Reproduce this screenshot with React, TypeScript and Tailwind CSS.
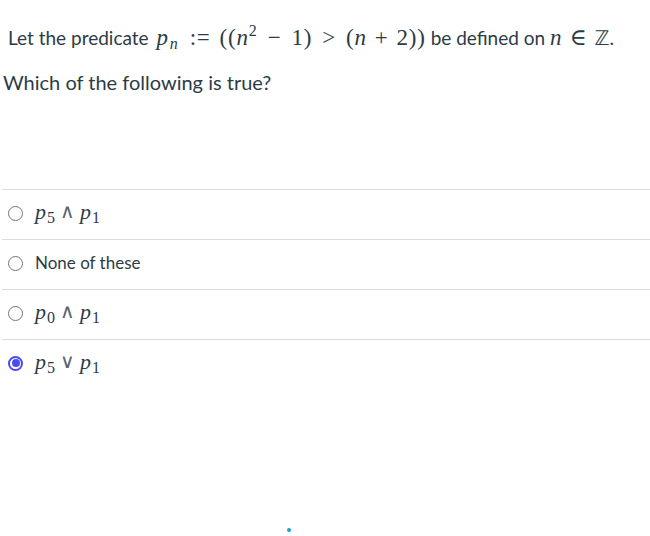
import React from "react";

function V({ children }: { children: React.ReactNode }) {
  return <span className="italic">{children}</span>;
}

function Math({ children, size = "text-[23px]", cls = "" }: { children: React.ReactNode; size?: string; cls?: string }) {
  return (
    <span
      className={`${size} ${cls} leading-none whitespace-nowrap`}
      style={{ fontFamily: '"Liberation Serif", "DejaVu Serif", serif' }}
    >
      {children}
    </span>
  );
}

function Sub({ children }: { children: React.ReactNode }) {
  return <span className="text-[16px] relative top-[4px] not-italic ml-[1px]">{children}</span>;
}

function Op({ children, cls }: { children: React.ReactNode; cls: string }) {
  return (
    <span className={cls} style={{ fontFamily: '"DejaVu Sans", sans-serif', fontWeight: 200 }}>
      {children}
    </span>
  );
}

function Radio({ checked }: { checked?: boolean }) {
  if (checked) {
    return (
      <span className="w-[15px] h-[15px] rounded-full border-2 border-[#4b4bee] flex items-center justify-center shrink-0">
        <span className="w-[8px] h-[8px] rounded-full bg-[#4b4bee]" />
      </span>
    );
  }
  return <span className="w-[15px] h-[15px] rounded-full border border-[#767676] shrink-0" />;
}

function Option({ checked, children }: { checked?: boolean; children: React.ReactNode }) {
  return (
    <div className="h-[50px] flex items-center pl-[6px] pb-[3px] gap-[12px] border-t border-[#dcdcdc]">
      <Radio checked={checked} />
      <span className="text-[17px] text-[#2d3b45]">{children}</span>
    </div>
  );
}

function Conj({ a, op }: { a: string; op: string }) {
  return (
    <Math size="text-[22px]">
      <V>p</V>
      <Sub>{a}</Sub>
      <Op cls="mx-[5px] text-[20px] leading-none text-[#5a6670] relative top-[-1px]">{op}</Op>
      <V>p</V>
      <Sub>1</Sub>
    </Math>
  );
}

export default function App() {
  return (
    <div
      className="relative w-[650px] h-[536px] bg-white text-[#2d3b45] overflow-hidden"
      style={{ fontFamily: 'Lato, "Noto Sans", sans-serif' }}
    >
      <div className="pt-[25px] pl-[8px] text-[19px] leading-[26px] whitespace-nowrap">
        Let the predicate{" "}
        <Math cls="tracking-[0.8px] ml-[3px]">
          <V>p</V>
          <Sub>
            <V>n</V>
          </Sub>
          <span className="ml-[11px]">:=</span>
          <span className="ml-[9px]">((</span>
          <V>n</V>
          <span className="text-[16px] relative top-[-9px]">2</span>
          <span className="mx-[10px]">−</span>1)
          <span className="mx-[10px]">&gt;</span>(<V>n</V>
          <span className="mx-[8px]">+</span>2))
        </Math>{" "}
        be defined on{" "}
        <Math>
          <V>n</V>
          <span className="mx-[8px]">∈</span>
          <span style={{ fontFamily: '"DejaVu Sans", sans-serif' }} className="text-[20px]">ℤ</span>
        </Math>
        .
      </div>
      <div className="pt-[18px] pl-[3px] text-[20px] leading-[26px]">Which of the following is true?</div>

      <div className="mt-[94px] ml-[2px]">
        <Option>
          <Conj a="5" op="∧" />
        </Option>
        <Option>None of these</Option>
        <Option>
          <Conj a="0" op="∧" />
        </Option>
        <Option checked>
          <Conj a="5" op="∨" />
        </Option>
      </div>

      <span className="absolute left-[287px] top-[528px] w-[4px] h-[4px] rounded-full bg-[#1aa3c8]" />
    </div>
  );
}
